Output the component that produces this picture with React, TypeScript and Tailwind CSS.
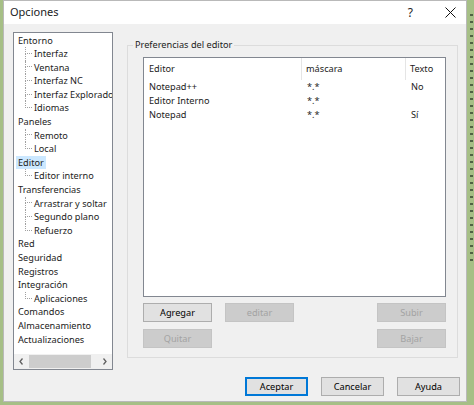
import { type ReactNode } from "react";

type TreeNode = { label: string; children?: string[]; selected?: boolean };

const tree: TreeNode[] = [
  { label: "Entorno", children: ["Interfaz", "Ventana", "Interfaz NC", "Interfaz Explorador", "Idiomas"] },
  { label: "Paneles", children: ["Remoto", "Local"] },
  { label: "Editor", selected: true, children: ["Editor interno"] },
  { label: "Transferencias", children: ["Arrastrar y soltar", "Segundo plano", "Refuerzo"] },
  { label: "Red" },
  { label: "Seguridad" },
  { label: "Registros" },
  { label: "Integración", children: ["Aplicaciones"] },
  { label: "Comandos" },
  { label: "Almacenamiento" },
  { label: "Actualizaciones" },
];

const editors = [
  { name: "Notepad++", mask: "*.*", text: "No" },
  { name: "Editor Interno", mask: "*.*", text: "" },
  { name: "Notepad", mask: "*.*", text: "Sí" },
];

function ChildRow({ label, last }: { label: string; last: boolean }) {
  return (
    <div className="flex h-[13.6px] items-stretch">
      <div className="ml-[7px] flex w-[7px] shrink-0 flex-col">
        <div className="h-1/2 border-b border-l border-dotted border-[#a0a0a0]" />
        <div className={`h-1/2 ${last ? "" : "border-l border-dotted border-[#a0a0a0]"}`} />
      </div>
      <span className="ml-[2px] whitespace-nowrap leading-[13.6px]">{label}</span>
    </div>
  );
}

function Button({ children, disabled, primary, className = "" }: { children: ReactNode; disabled?: boolean; primary?: boolean; className?: string }) {
  const look = disabled
    ? "border-[#c4c4c4] bg-[#cccccc] text-[#a3a3a3]"
    : primary
      ? "border-2 border-[#0078d7] bg-[#e1e1e1] text-black"
      : "border-[#adadad] bg-[#e1e1e1] text-black";
  return (
    <div className={`flex h-[19px] items-center justify-center border text-[9.2px] ${look} ${className}`}>{children}</div>
  );
}

export default function App() {
  return (
    <div className="relative h-[405px] w-[474px] overflow-hidden bg-[#a6bf86] font-['Noto_Sans',sans-serif] text-[9.2px] text-[#222]">
      <div className="flex">
        <div className="ml-[3px] flex h-[402px] w-[464px] flex-col border border-[#b9b9b9] bg-[#f0f0f0]">
          {/* title bar */}
          <div className="flex h-[23px] shrink-0 items-center bg-white pl-[6px]">
            <span className="text-[11px]">Opciones</span>
            <span className="ml-auto mr-[32px] text-[12px]">?</span>
            <svg width="11" height="11" viewBox="0 0 11 11" className="mr-[10px]">
              <path d="M0.5 0.5 L10.5 10.5 M10.5 0.5 L0.5 10.5" stroke="#111" strokeWidth="1" />
            </svg>
          </div>

          <div className="flex pt-[8px]">
            {/* tree */}
            <div className="ml-[9px] flex h-[338px] w-[100px] shrink-0 flex-col overflow-hidden border border-[#828790] bg-white">
              <div className="min-h-0 flex-1 overflow-hidden pl-[4px] pt-[0.5px]">
                {tree.map((node) => (
                  <div key={node.label}>
                    <div className="h-[13.6px] leading-[13.6px]">
                      <span className={`-ml-[2px] px-[2px] ${node.selected ? "bg-[#cce8ff]" : ""}`}>{node.label}</span>
                    </div>
                    {node.children?.map((child, i) => (
                      <ChildRow key={child} label={child} last={i === node.children!.length - 1} />
                    ))}
                  </div>
                ))}
              </div>
              <div className="flex h-[15px] shrink-0 items-center bg-[#f0f0f0]">
                <svg width="15" height="15" viewBox="0 0 15 15">
                  <path d="M8.5 4.5 L6 7.5 L8.5 10.5" stroke="#606060" strokeWidth="1.3" fill="none" />
                </svg>
                <div className="h-[13px] w-[62px] bg-[#cdcdcd]" />
                <div className="flex-1" />
                <svg width="15" height="15" viewBox="0 0 15 15">
                  <path d="M6.5 4.5 L9 7.5 L6.5 10.5" stroke="#606060" strokeWidth="1.3" fill="none" />
                </svg>
              </div>
            </div>

            {/* group box */}
            <div className="relative ml-[14px] mt-[13px] h-[313px] w-[331px] border border-[#dcdcdc]">
              <span className="absolute -top-[8px] left-[5px] bg-[#f0f0f0] px-[2px] leading-[14px]">Preferencias del editor</span>
              <div className="ml-[15px] mt-[11px] h-[240px] w-[303px] border border-[#828790] bg-white">
                <div className="flex h-[22px] items-stretch">
                  <div className="flex w-[158px] items-center border-r border-[#e5e5e5] pl-[5px]">Editor</div>
                  <div className="flex w-[104px] items-center border-r border-[#e5e5e5] pl-[4px]">máscara</div>
                  <div className="flex flex-1 items-center pl-[4px]">Texto</div>
                </div>
                {editors.map((e) => (
                  <div key={e.name} className="flex h-[14px] items-center leading-[14px]">
                    <div className="w-[158px] pl-[5px]">{e.name}</div>
                    <div className="w-[104px] pl-[5px]">{e.mask}</div>
                    <div className="flex-1 pl-[5px]">{e.text}</div>
                  </div>
                ))}
              </div>
              <div className="ml-[15px] mt-[6px] grid w-[303px] grid-cols-[69px_69px_1fr_69px] gap-x-[13px] gap-y-[7px]">
                <Button>Agregar</Button>
                <Button disabled>editar</Button>
                <div />
                <Button disabled>Subir</Button>
                <Button disabled>Quitar</Button>
                <div />
                <div />
                <Button disabled>Bajar</Button>
              </div>
            </div>
          </div>

          {/* dialog buttons */}
          <div className="mr-[6px] mt-[7px] flex justify-end gap-[13px]">
            <Button primary className="w-[63px]">Aceptar</Button>
            <Button className="w-[63px]">Cancelar</Button>
            <Button className="w-[63px]">Ayuda</Button>
          </div>
        </div>
        <div className="ml-[3px] mt-[14px] flex flex-col gap-[5px]">
          {Array.from({ length: 36 }).map((_, i) => (
            <div key={i} className="h-[2px] w-[3px] bg-[#4f6243]" />
          ))}
        </div>
      </div>
    </div>
  );
}
